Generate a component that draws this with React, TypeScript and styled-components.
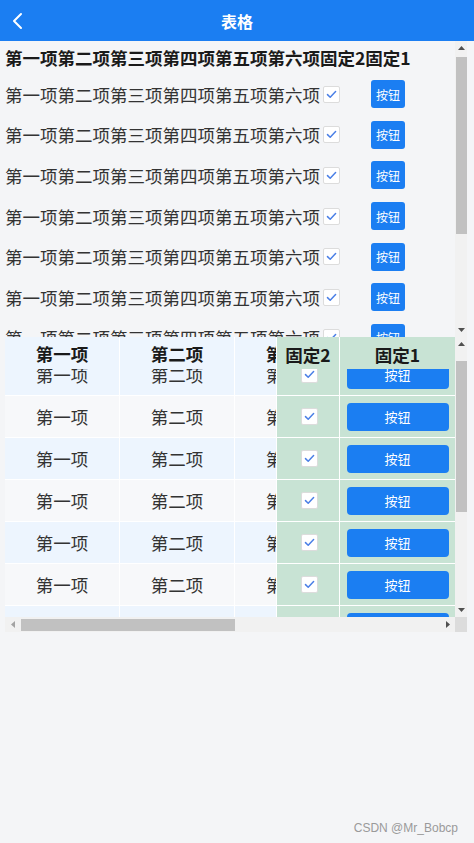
import React, { useEffect, useRef } from "react";
import styled, { createGlobalStyle } from "styled-components";

const BLUE = "#1b7ef2";
const GREEN = "#c8e3d4";

const GlobalStyle = createGlobalStyle`
  html, body {
    margin: 0;
    padding: 0;
    background: #f4f5f7;
  }
  * {
    box-sizing: border-box;
  }
  body {
    font-family: "Noto Sans CJK SC", "Noto Sans", sans-serif;
    color: #222;
  }
`;

const cols = ["第一项", "第二项", "第三项", "第四项", "第五项", "第六项"];
const listRows = Array.from({ length: 10 }, (_, i) => i);
const gridRows = Array.from({ length: 11 }, (_, i) => i);

const CheckMark: React.FC = () => (
  <Check>
    <svg width="11" height="9" viewBox="0 0 11 9">
      <path
        d="M1.5 4.6 L4.2 7.2 L9.6 1.6"
        fill="none"
        stroke="#4a7fe6"
        strokeWidth="1.5"
        strokeLinecap="round"
        strokeLinejoin="round"
      />
    </svg>
  </Check>
);

type Dir = "up" | "down" | "left" | "right";
const arrowPts: Record<Dir, string> = {
  up: "0,4 7,4 3.5,0",
  down: "0,0 7,0 3.5,4",
  left: "4,0 4,7 0,3.5",
  right: "0,0 0,7 4,3.5",
};

const Arrow: React.FC<{ dir: Dir; dim?: boolean }> = ({ dir, dim }) => {
  const v = dir === "up" || dir === "down";
  return (
    <ArrowBtn $v={v}>
      <svg width={v ? 7 : 4} height={v ? 4 : 7}>
        <polygon points={arrowPts[dir]} fill={dim ? "#a3a3a3" : "#505050"} />
      </svg>
    </ArrowBtn>
  );
};

const VScroll: React.FC<{ top: number; size: number }> = ({ top, size }) => (
  <VBar>
    <Arrow dir="up" />
    <VTrack>
      <VThumb $top={top} $size={size} />
    </VTrack>
    <Arrow dir="down" />
  </VBar>
);

const App: React.FC = () => {
  const gridRef = useRef<HTMLDivElement>(null);

  useEffect(() => {
    if (gridRef.current) gridRef.current.scrollTop = 15;
  }, []);

  return (
    <Page>
      <GlobalStyle />
      <NavBar>
        <Back>
          <svg width="14" height="18" viewBox="0 0 14 18">
            <path
              d="M10 2 L3 9 L10 16"
              fill="none"
              stroke="#fff"
              strokeWidth="2"
              strokeLinecap="round"
              strokeLinejoin="round"
            />
          </svg>
        </Back>
        <Title>表格</Title>
        <span />
      </NavBar>

      <ListFrame>
        <ListBody>
          <ListHead>{cols.join("")}固定2固定1</ListHead>
          {listRows.map((i) => (
            <ListRow key={i}>
              <span>{cols.join("")}</span>
              <CheckMark />
              <SmallBtn>按钮</SmallBtn>
            </ListRow>
          ))}
        </ListBody>
        <VScroll top={2} size={177} />
      </ListFrame>

      <GridFrame>
        <GridView ref={gridRef}>
          <HeadRow>
            {cols.map((c) => (
              <Cell key={c}>{c}</Cell>
            ))}
            <FixedCell $right={116} $w={63} $head>
              固定2
            </FixedCell>
            <FixedCell $right={0} $w={116} $head>
              固定1
            </FixedCell>
          </HeadRow>
          {gridRows.map((i) => (
            <BodyRow key={i} $odd={i % 2 === 1}>
              {cols.map((c) => (
                <Cell key={c}>{c}</Cell>
              ))}
              <FixedCell $right={116} $w={63}>
                <CheckMark />
              </FixedCell>
              <FixedCell $right={0} $w={116}>
                <WideBtn>按钮</WideBtn>
              </FixedCell>
            </BodyRow>
          ))}
        </GridView>
        <VScroll top={10} size={151} />
        <HBar>
          <Arrow dir="left" dim />
          <HTrack>
            <HThumb />
          </HTrack>
          <Arrow dir="right" />
        </HBar>
        <Corner />
      </GridFrame>

      <Watermark>CSDN @Mr_Bobcp</Watermark>
    </Page>
  );
};

export default App;

const Page = styled.div`
  min-height: 100vh;
  display: flex;
  flex-direction: column;
  background: #f4f5f7;
`;

const NavBar = styled.div`
  height: 41px;
  background: ${BLUE};
  display: grid;
  grid-template-columns: 44px 1fr 44px;
  align-items: center;
`;

const Back = styled.div`
  display: flex;
  align-items: center;
  padding-left: 11px;
  padding-top: 1px;
`;

const Title = styled.div`
  text-align: center;
  color: #fff;
  font-size: 16px;
  font-weight: 700;
`;

const VBar = styled.div`
  width: 12px;
  display: flex;
  flex-direction: column;
  background: #f1f1f1;
`;

const VTrack = styled.div`
  flex: 1;
  display: flex;
  flex-direction: column;
  align-items: center;
`;

const VThumb = styled.div<{ $top: number; $size: number }>`
  margin-top: ${(p) => p.$top}px;
  width: 11px;
  height: ${(p) => p.$size}px;
  background: #c1c1c1;
`;

const HBar = styled.div`
  height: 15px;
  display: flex;
  background: #f1f1f1;
`;

const HTrack = styled.div`
  flex: 1;
  display: flex;
  align-items: center;
`;

const HThumb = styled.div`
  margin-left: 1px;
  width: 214px;
  height: 12px;
  background: #c1c1c1;
`;

const ArrowBtn = styled.div<{ $v: boolean }>`
  flex: none;
  width: ${(p) => (p.$v ? "12px" : "15px")};
  height: ${(p) => (p.$v ? "14px" : "15px")};
  display: flex;
  align-items: center;
  justify-content: center;

  svg {
    display: block;
  }
`;

const Corner = styled.div`
  background: #dcdcdc;
`;

const ListFrame = styled.div`
  height: 296px;
  margin-right: 7px;
  display: flex;
`;

const ListBody = styled.div`
  flex: 1;
  min-width: 0;
  padding-left: 5px;
  overflow: hidden;
`;

const ListHead = styled.div`
  height: 33px;
  line-height: 34px;
  font-size: 17.5px;
  font-weight: 700;
  white-space: nowrap;
  color: #1a1a1a;
`;

const ListRow = styled.div`
  height: 40.6px;
  display: flex;
  align-items: center;
  font-size: 17.5px;
  white-space: nowrap;
  color: #333;
`;

const Check = styled.span`
  flex: none;
  width: 17px;
  height: 17px;
  margin-left: 3px;
  background: #fff;
  border: 1px solid #dcdcdc;
  border-radius: 2px;
  display: inline-flex;
  align-items: center;
  justify-content: center;
`;

const SmallBtn = styled.span`
  flex: none;
  margin-left: 31px;
  width: 34px;
  height: 28px;
  border-radius: 3px;
  background: ${BLUE};
  color: #fff;
  font-size: 12px;
  display: inline-flex;
  align-items: center;
  justify-content: center;
`;

const GridFrame = styled.div`
  height: 295px;
  margin: 0 7px 0 5px;
  display: grid;
  grid-template-columns: minmax(0, 1fr) 12px;
  grid-template-rows: minmax(0, 1fr) 15px;
`;

const GridView = styled.div`
  overflow: hidden;
  background: #f4f5f7;
`;

const HeadRow = styled.div`
  position: sticky;
  top: 0;
  z-index: 3;
  width: 869px;
  height: 32px;
  display: flex;
  background: #edf5fe;
  font-size: 17.5px;
  font-weight: 700;
  color: #1a1a1a;
`;

const BodyRow = styled.div<{ $odd: boolean }>`
  width: 869px;
  height: 42px;
  display: flex;
  background: ${(p) => (p.$odd ? "#f7f8fa" : "#edf5fe")};
  border-bottom: 1px solid #fff;
  font-size: 17.5px;
  color: #333;
`;

const Cell = styled.div`
  flex: none;
  width: 115px;
  display: flex;
  align-items: center;
  justify-content: center;
  border-right: 1px solid #fff;
  white-space: nowrap;
`;

const FixedCell = styled.div<{ $right: number; $w: number; $head?: boolean }>`
  flex: none;
  position: sticky;
  right: ${(p) => p.$right}px;
  z-index: ${(p) => (p.$head ? 4 : 1)};
  width: ${(p) => p.$w}px;
  display: flex;
  align-items: center;
  justify-content: center;
  background: ${GREEN};
  border-left: 1px solid #fff;
  white-space: nowrap;
  padding-top: ${(p) => (p.$head ? "2px" : "0")};
`;

const WideBtn = styled.span`
  width: 102px;
  height: 28px;
  border-radius: 4px;
  background: ${BLUE};
  color: #fff;
  font-size: 13px;
  display: inline-flex;
  align-items: center;
  justify-content: center;
`;

const Watermark = styled.div`
  margin-top: auto;
  text-align: right;
  padding: 0 16px 8px 0;
  font-family: "Liberation Sans", Arial, sans-serif;
  font-size: 12px;
  color: #9a9a9a;
`;
